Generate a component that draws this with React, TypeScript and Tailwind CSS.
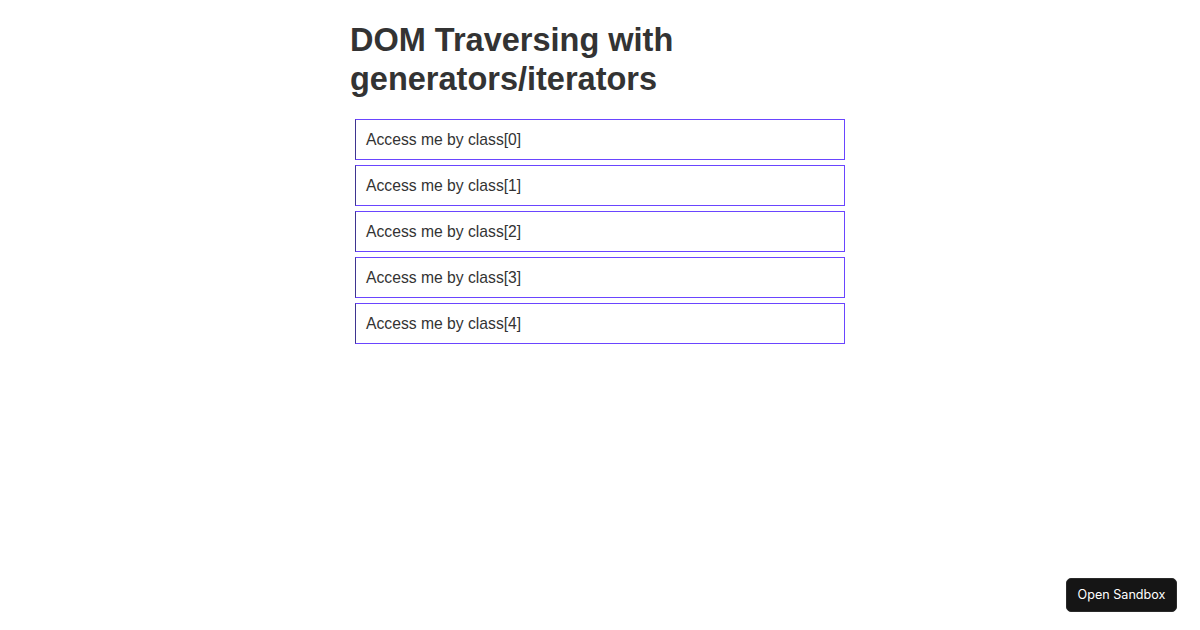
import React from 'react';

const items = [0, 1, 2, 3, 4];

export default function App() {
  return (
    <div className="min-h-[630px] bg-white text-[#333] font-['Liberation_Sans',Arial,sans-serif]">
      <div className="w-[500px] mx-auto pt-[21px]">
        <h1 className="text-[32.5px] leading-[39px] font-bold">DOM Traversing with generators/iterators</h1>

        <div className="mt-[20px] flex flex-col gap-[5px] px-[5px]">
          {items.map(i => (
            <div
              key={i}
              className="h-[41px] flex items-center pl-[10px] text-[15.7px] border border-[#6a45ff] border-l-[#3f3590]"
            >
              Access me by class[{i}]
            </div>
          ))}
        </div>
      </div>

      <button className="fixed right-[23px] bottom-[18px] w-[111px] h-[34px] rounded-[5px] bg-[#151515] text-white text-[12.6px] font-['Inter',sans-serif] border border-[#2a2a2a]">
        Open Sandbox
      </button>
    </div>
  );
}
